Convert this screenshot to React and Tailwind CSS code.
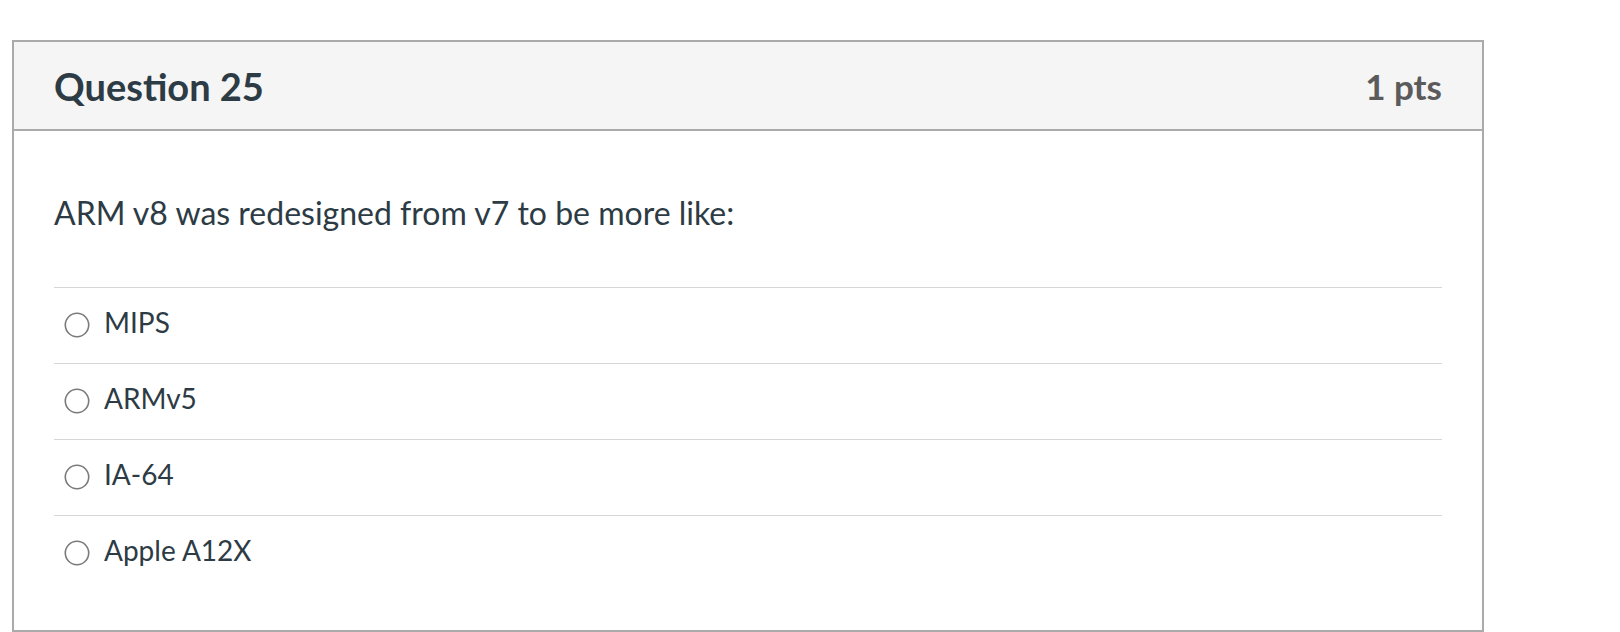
const answers = ['MIPS', 'ARMv5', 'IA-64', 'Apple A12X']

function Radio() {
  return (
    <svg width="26" height="26" viewBox="0 0 26 26" className="shrink-0 mt-[8px]">
      <circle cx="13" cy="13" r="11.7" fill="white" stroke="#7a7a7a" strokeWidth="1.6" />
    </svg>
  )
}

export default function App() {
  return (
    <div className="h-[632px] w-[1620px] overflow-hidden bg-white pt-[40px] pl-[12px] font-['Lato',sans-serif] text-[#2d3b45]">
      <div className="w-[1472px] h-[592px] border-2 border-[#aaaaaa] box-border">
        <div className="h-[89px] bg-[#f5f5f5] border-b-2 border-[#aaaaaa] px-[40px] flex items-center justify-between">
          <h2 className="text-[38px] font-bold leading-[1.2] pt-[2px]">Question 25</h2>
          <div className="text-[35px] font-bold leading-[1.2] text-[#5b5b5b]">1 pts</div>
        </div>
        <div className="px-[40px] pt-[62px]">
          <p className="text-[32px] leading-[40px]">ARM v8 was redesigned from v7 to be more like:</p>
          <div className="mt-[54px]">
            {answers.map((a) => (
              <div key={a} className="h-[76px] border-t border-[#d6d6d6] flex items-start gap-[14px] pl-[10px] pt-[16px]">
                <Radio />
                <span className="text-[28px] leading-[36px]">{a}</span>
              </div>
            ))}
          </div>
        </div>
      </div>
    </div>
  )
}
